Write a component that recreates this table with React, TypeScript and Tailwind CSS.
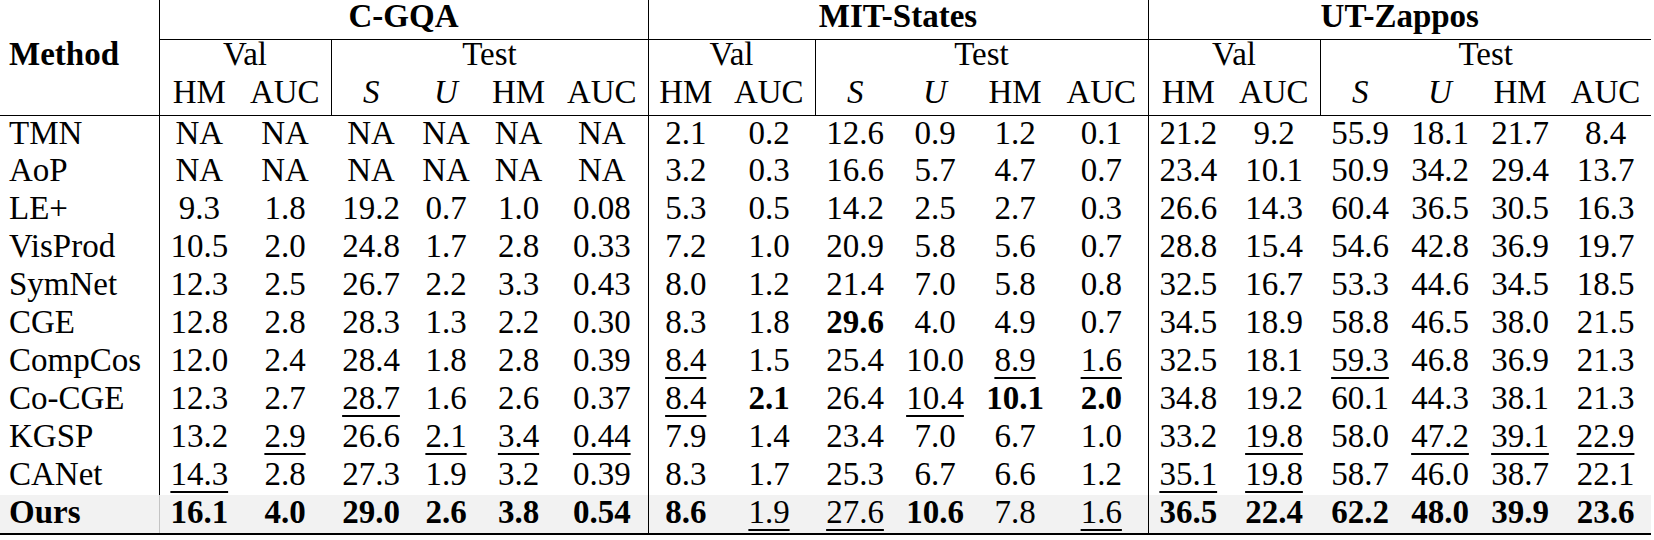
import React from 'react';

// column widths measured off the reference (method + 3 groups of val/test)
const widths = [159, 80, 92, 80, 70, 75, 92, 75, 92, 80, 80, 80, 93, 80, 92, 80, 80, 80, 91];

// * = bold, _ = underlined
const rows: [string, string[]][] = [
    ['TMN', ['NA', 'NA', 'NA', 'NA', 'NA', 'NA', '2.1', '0.2', '12.6', '0.9', '1.2', '0.1', '21.2', '9.2', '55.9', '18.1', '21.7', '8.4']],
    ['AoP', ['NA', 'NA', 'NA', 'NA', 'NA', 'NA', '3.2', '0.3', '16.6', '5.7', '4.7', '0.7', '23.4', '10.1', '50.9', '34.2', '29.4', '13.7']],
    ['LE+', ['9.3', '1.8', '19.2', '0.7', '1.0', '0.08', '5.3', '0.5', '14.2', '2.5', '2.7', '0.3', '26.6', '14.3', '60.4', '36.5', '30.5', '16.3']],
    ['VisProd', ['10.5', '2.0', '24.8', '1.7', '2.8', '0.33', '7.2', '1.0', '20.9', '5.8', '5.6', '0.7', '28.8', '15.4', '54.6', '42.8', '36.9', '19.7']],
    ['SymNet', ['12.3', '2.5', '26.7', '2.2', '3.3', '0.43', '8.0', '1.2', '21.4', '7.0', '5.8', '0.8', '32.5', '16.7', '53.3', '44.6', '34.5', '18.5']],
    ['CGE', ['12.8', '2.8', '28.3', '1.3', '2.2', '0.30', '8.3', '1.8', '*29.6', '4.0', '4.9', '0.7', '34.5', '18.9', '58.8', '46.5', '38.0', '21.5']],
    ['CompCos', ['12.0', '2.4', '28.4', '1.8', '2.8', '0.39', '_8.4', '1.5', '25.4', '10.0', '_8.9', '_1.6', '32.5', '18.1', '_59.3', '46.8', '36.9', '21.3']],
    ['Co-CGE', ['12.3', '2.7', '_28.7', '1.6', '2.6', '0.37', '_8.4', '*2.1', '26.4', '_10.4', '*10.1', '*2.0', '34.8', '19.2', '60.1', '44.3', '38.1', '21.3']],
    ['KGSP', ['13.2', '_2.9', '26.6', '_2.1', '_3.4', '_0.44', '7.9', '1.4', '23.4', '7.0', '6.7', '1.0', '33.2', '_19.8', '58.0', '_47.2', '_39.1', '_22.9']],
    ['CANet', ['_14.3', '2.8', '27.3', '1.9', '3.2', '0.39', '8.3', '1.7', '25.3', '6.7', '6.6', '1.2', '_35.1', '_19.8', '58.7', '46.0', '38.7', '22.1']],
];
const ours = ['*16.1', '*4.0', '*29.0', '*2.6', '*3.8', '*0.54', '*8.6', '_1.9', '_27.6', '*10.6', '7.8', '_1.6', '*36.5', '*22.4', '*62.2', '*48.0', '*39.9', '*23.6'];

const groups = ['C-GQA', 'MIT-States', 'UT-Zappos'];

const Value = ({ v }: { v: string }) => {
    if (v.startsWith('*')) return <span className="font-bold">{v.slice(1)}</span>;
    if (v.startsWith('_')) return <span className="underline underline-offset-[6px] decoration-[length:1.5px]">{v.slice(1)}</span>;
    return <span>{v}</span>;
};

const DataRow = ({ name, vals, highlight }: { name: string; vals: string[]; highlight?: boolean }) => (
    <tr className={`h-[38px] ${highlight ? 'bg-[#f2f2f2] h-[39px]' : ''}`}>
        <td className={`align-top pl-[9px] leading-[34px] border-r ${highlight ? 'font-bold border-[#c4c4c4]' : 'border-black'}`}>{name}</td>
        {vals.map((v, i) => (
            <td key={i} className={`align-top text-center leading-[34px] ${i === 5 || i === 11 ? 'border-r border-black' : ''}`}>
                <Value v={v} />
            </td>
        ))}
    </tr>
);

export default function App() {
    return (
        <div className="w-[1654px] h-[540px] bg-white text-black font-['Liberation_Serif','Times_New_Roman',serif] text-[33px]">
            <table className="table-fixed border-collapse w-[1651px] whitespace-nowrap">
                <colgroup>
                    {widths.map((w, i) => <col key={i} style={{ width: w }} />)}
                </colgroup>
                <thead>
                    <tr className="h-[39px]">
                        <th rowSpan={3} className="align-top text-left pl-[9px] pt-[37px] leading-[34px] font-bold border-r border-b border-black">Method</th>
                        {groups.map((g, i) => (
                            <th key={g} colSpan={6} className={`align-top text-center leading-[33px] font-bold border-b border-black ${i < 2 ? 'border-r' : ''}`}>{g}</th>
                        ))}
                    </tr>
                    <tr className="h-[36px]">
                        {groups.map((g, i) => (
                            <React.Fragment key={g}>
                                <th colSpan={2} className="align-top text-center leading-[29px] font-normal border-r border-black">Val</th>
                                <th colSpan={4} className={`align-top text-center leading-[29px] font-normal border-black ${i < 2 ? 'border-r' : ''}`}>Test</th>
                            </React.Fragment>
                        ))}
                    </tr>
                    <tr className="h-[40px]">
                        {groups.map((g, i) => (
                            <React.Fragment key={g}>
                                <th className="align-top text-center leading-[34px] font-normal border-b border-black">HM</th>
                                <th className="align-top text-center leading-[34px] font-normal border-b border-r border-black">AUC</th>
                                <th className="align-top text-center leading-[34px] font-normal italic border-b border-black">S</th>
                                <th className="align-top text-center leading-[34px] font-normal italic border-b border-black">U</th>
                                <th className="align-top text-center leading-[34px] font-normal border-b border-black">HM</th>
                                <th className={`align-top text-center leading-[34px] font-normal border-b border-black ${i < 2 ? 'border-r' : ''}`}>AUC</th>
                            </React.Fragment>
                        ))}
                    </tr>
                </thead>
                <tbody className="border-b-2 border-black">
                    {rows.map(([name, vals]) => <DataRow key={name} name={name} vals={vals} />)}
                    <DataRow name="Ours" vals={ours} highlight />
                </tbody>
            </table>
        </div>
    );
}
